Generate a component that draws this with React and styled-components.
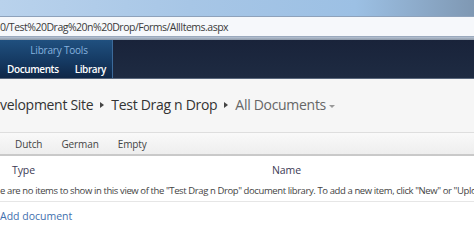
import React from 'react';
import styled, {createGlobalStyle} from 'styled-components';

const GlobalStyle = createGlobalStyle`
  html, body{
    margin: 0;
    padding: 0;
    background: #fff;
    overflow: hidden;
  }
  body{
    font-family: "Open Sans", "DejaVu Sans", sans-serif;
  }
`;

const Page = styled.div`
  width: 474px;
  height: 246px;
  overflow: hidden;
  background: #fff;
`;

const WindowChrome = styled.div`
  height: 16px;
  background: linear-gradient(to right, #b9d2ec 0%, #a7c6e6 40%, #9cc0e4 75%, #7f98b3 100%);
`;

const AddressBar = styled.div`
  height: 19px;
  display: flex;
  align-items: center;
  background: #f6f8fb;
  border-top: 1px solid #8ea2bb;
  border-bottom: 1px solid #9aa9bd;
  font-size: 10.5px;
  letter-spacing: -0.5px;
  color: #3a3a3a;
  white-space: nowrap;
`;

const Separator = styled.div`
  height: 3px;
  background: linear-gradient(to bottom, #b6c2d2, #8d99a8);
`;

const Ribbon = styled.div`
  height: 38px;
  display: flex;
  background: linear-gradient(to bottom, #19233a, #1e2b42);
  border-bottom: 1px solid #59677c;
`;

const ContextGroup = styled.div`
  width: 112px;
  display: flex;
  flex-direction: column;
  background: linear-gradient(to bottom, #20507f, #153a63 55%, #0f2747);
  border-right: 1px solid #3c6a9a;
`;

const GroupTitle = styled.div`
  height: 20px;
  display: flex;
  align-items: center;
  justify-content: center;
  font-size: 10px;
  letter-spacing: -0.2px;
  color: #86b3df;
  padding-left: 6px;
`;

const RibbonTabs = styled.div`
  display: flex;
  gap: 16px;
  padding-left: 7px;
  align-items: center;
  height: 17px;
`;

const RibbonTab = styled.span`
  font-size: 10px;
  font-weight: 600;
  letter-spacing: -0.4px;
  color: #fff;
`;

const TitleArea = styled.div`
  height: 53px;
  display: flex;
  align-items: center;
  background: #f6f6f6;
  padding-bottom: 2px;
  box-sizing: border-box;
`;

const Crumbs = styled.div`
  display: flex;
  align-items: center;
  gap: 6px;
  font-size: 14px;
  letter-spacing: -0.3px;
  white-space: nowrap;
`;

const Crumb = styled.span`
  color: ${p => (p.$current ? '#666' : '#333')};
`;

const Arrow = styled.span`
  width: 0;
  height: 0;
  border-top: 3px solid transparent;
  border-bottom: 3px solid transparent;
  border-left: 4px solid #444;
  margin: 0 1px;
`;

const DropArrow = styled.span`
  width: 0;
  height: 0;
  border-left: 3px solid transparent;
  border-right: 3px solid transparent;
  border-top: 3px solid #999;
  margin-left: -3px;
  margin-top: 3px;
`;

const ViewTabs = styled.div`
  height: 21px;
  display: flex;
  align-items: center;
  gap: 19px;
  padding-left: 15px;
  background: linear-gradient(to bottom, #f9f9f9, #eeeeee);
  border-top: 1px solid #dedede;
  border-bottom: 2px solid #c9c9c9;
`;

const ViewTab = styled.span`
  font-size: 10px;
  letter-spacing: -0.1px;
  color: #444;
`;

const ListHeader = styled.div`
  display: flex;
  height: 20px;
  align-items: center;
  margin-top: 4px;
`;

const HeaderCell = styled.span`
  width: ${p => p.$w}px;
  font-size: 10.5px;
  letter-spacing: -0.1px;
  color: #3c3a55;
  padding-left: ${p => p.$pad || 0}px;
`;

const EmptyRow = styled.div`
  height: 21px;
  display: flex;
  align-items: center;
  font-size: 9.5px;
  letter-spacing: -0.4px;
  color: #444;
  white-space: nowrap;
  border-bottom: 1px solid #e6e6e6;
`;

const AddLink = styled.a`
  display: block;
  margin-top: 7px;
  font-size: 10.5px;
  color: #3f6fae;
  text-decoration: none;
`;

const App = () => {
  return (
    <Page>
      <GlobalStyle />
      <WindowChrome />
      <AddressBar>0/Test%20Drag%20n%20Drop/Forms/AllItems.aspx</AddressBar>
      <Separator />
      <Ribbon>
        <ContextGroup>
          <GroupTitle>Library Tools</GroupTitle>
          <RibbonTabs>
            <RibbonTab>Documents</RibbonTab>
            <RibbonTab>Library</RibbonTab>
          </RibbonTabs>
        </ContextGroup>
      </Ribbon>
      <TitleArea>
        <Crumbs>
          <Crumb>velopment Site</Crumb>
          <Arrow />
          <Crumb>Test Drag n Drop</Crumb>
          <Arrow />
          <Crumb $current>All Documents</Crumb>
          <DropArrow />
        </Crumbs>
      </TitleArea>
      <ViewTabs>
        <ViewTab>Dutch</ViewTab>
        <ViewTab>German</ViewTab>
        <ViewTab>Empty</ViewTab>
      </ViewTabs>
      <ListHeader>
        <HeaderCell $w={260} $pad={12}>Type</HeaderCell>
        <HeaderCell $w={100}>Name</HeaderCell>
      </ListHeader>
      <EmptyRow>e are no items to show in this view of the "Test Drag n Drop" document library. To add a new item, click "New" or "Uplo</EmptyRow>
      <AddLink href="#">Add document</AddLink>
    </Page>
  );
};

export default App;
